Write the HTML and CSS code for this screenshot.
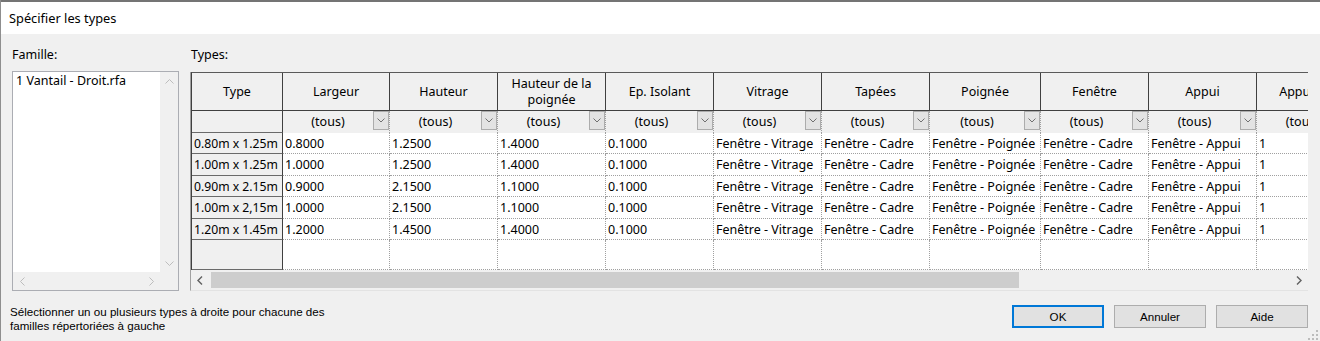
FILE: index.html
```html
<!DOCTYPE html>
<html lang="fr">
<head>
<meta charset="utf-8">
<title>Spécifier les types</title>
<link rel="stylesheet" href="styles.css">
</head>
<body>
<div class="window">
  <div class="topstrip"></div>
  <div class="titlebar">Spécifier les types</div>
  <div class="main">
    <div class="col-family">
      <div class="label">Famille:</div>
      <div class="listbox">
        <div class="list-area"><div class="list-item">1 Vantail - Droit.rfa</div></div>
        <div class="vscroll">
          <span class="sb-arrow"><svg width="9" height="5" viewBox="0 0 9 5"><path d="M0.5 4.5 L4.5 0.5 L8.5 4.5" fill="none" stroke="#bdbdbd" stroke-width="1"/></svg></span>
          <span class="sb-arrow"><svg width="9" height="5" viewBox="0 0 9 5"><path d="M0.5 0.5 L4.5 4.5 L8.5 0.5" fill="none" stroke="#bdbdbd" stroke-width="1"/></svg></span>
        </div>
        <div class="hscroll">
          <span class="sb-arrow"><svg width="5" height="9" viewBox="0 0 5 9"><path d="M4.5 0.5 L0.5 4.5 L4.5 8.5" fill="none" stroke="#bdbdbd" stroke-width="1"/></svg></span>
          <span class="sb-arrow"><svg width="5" height="9" viewBox="0 0 5 9"><path d="M0.5 0.5 L4.5 4.5 L0.5 8.5" fill="none" stroke="#bdbdbd" stroke-width="1"/></svg></span>
        </div>
        <div class="corner"></div>
      </div>
    </div>
    <div class="col-types">
      <div class="label label-types">Types:</div>
      <div class="grid-box">
        <div class="grid-view">
          <div class="grid">
            <div class="hc">Type</div>
            <div class="hc">Largeur</div>
            <div class="hc">Hauteur</div>
            <div class="hc">Hauteur de la poignée</div>
            <div class="hc">Ep. Isolant</div>
            <div class="hc">Vitrage</div>
            <div class="hc">Tapées</div>
            <div class="hc">Poignée</div>
            <div class="hc">Fenêtre</div>
            <div class="hc">Appui</div>
            <div class="hc">Appui actif</div>

            <div class="rh"></div>
            <div class="fc"><span class="ft">(tous)</span><span class="dd"><svg width="8" height="5" viewBox="0 0 8 5"><path d="M0.5 0.5 L4 4 L7.5 0.5" fill="none" stroke="#707070"/></svg></span></div>
            <div class="fc"><span class="ft">(tous)</span><span class="dd"><svg width="8" height="5" viewBox="0 0 8 5"><path d="M0.5 0.5 L4 4 L7.5 0.5" fill="none" stroke="#707070"/></svg></span></div>
            <div class="fc"><span class="ft">(tous)</span><span class="dd"><svg width="8" height="5" viewBox="0 0 8 5"><path d="M0.5 0.5 L4 4 L7.5 0.5" fill="none" stroke="#707070"/></svg></span></div>
            <div class="fc"><span class="ft">(tous)</span><span class="dd"><svg width="8" height="5" viewBox="0 0 8 5"><path d="M0.5 0.5 L4 4 L7.5 0.5" fill="none" stroke="#707070"/></svg></span></div>
            <div class="fc"><span class="ft">(tous)</span><span class="dd"><svg width="8" height="5" viewBox="0 0 8 5"><path d="M0.5 0.5 L4 4 L7.5 0.5" fill="none" stroke="#707070"/></svg></span></div>
            <div class="fc"><span class="ft">(tous)</span><span class="dd"><svg width="8" height="5" viewBox="0 0 8 5"><path d="M0.5 0.5 L4 4 L7.5 0.5" fill="none" stroke="#707070"/></svg></span></div>
            <div class="fc"><span class="ft">(tous)</span><span class="dd"><svg width="8" height="5" viewBox="0 0 8 5"><path d="M0.5 0.5 L4 4 L7.5 0.5" fill="none" stroke="#707070"/></svg></span></div>
            <div class="fc"><span class="ft">(tous)</span><span class="dd"><svg width="8" height="5" viewBox="0 0 8 5"><path d="M0.5 0.5 L4 4 L7.5 0.5" fill="none" stroke="#707070"/></svg></span></div>
            <div class="fc"><span class="ft">(tous)</span><span class="dd"><svg width="8" height="5" viewBox="0 0 8 5"><path d="M0.5 0.5 L4 4 L7.5 0.5" fill="none" stroke="#707070"/></svg></span></div>
            <div class="fc"><span class="ft">(tous)</span><span class="dd"><svg width="8" height="5" viewBox="0 0 8 5"><path d="M0.5 0.5 L4 4 L7.5 0.5" fill="none" stroke="#707070"/></svg></span></div>

            <div class="rh">0.80m x 1.25m</div>
            <div class="dc">0.8000</div><div class="dc">1.2500</div><div class="dc">1.4000</div><div class="dc">0.1000</div>
            <div class="dc">Fenêtre - Vitrage</div><div class="dc">Fenêtre - Cadre</div><div class="dc">Fenêtre - Poignée</div>
            <div class="dc">Fenêtre - Cadre</div><div class="dc">Fenêtre - Appui</div><div class="dc">1</div>

            <div class="rh">1.00m x 1.25m</div>
            <div class="dc">1.0000</div><div class="dc">1.2500</div><div class="dc">1.4000</div><div class="dc">0.1000</div>
            <div class="dc">Fenêtre - Vitrage</div><div class="dc">Fenêtre - Cadre</div><div class="dc">Fenêtre - Poignée</div>
            <div class="dc">Fenêtre - Cadre</div><div class="dc">Fenêtre - Appui</div><div class="dc">1</div>

            <div class="rh">0.90m x 2.15m</div>
            <div class="dc">0.9000</div><div class="dc">2.1500</div><div class="dc">1.1000</div><div class="dc">0.1000</div>
            <div class="dc">Fenêtre - Vitrage</div><div class="dc">Fenêtre - Cadre</div><div class="dc">Fenêtre - Poignée</div>
            <div class="dc">Fenêtre - Cadre</div><div class="dc">Fenêtre - Appui</div><div class="dc">1</div>

            <div class="rh">1.00m x 2,15m</div>
            <div class="dc">1.0000</div><div class="dc">2.1500</div><div class="dc">1.1000</div><div class="dc">0.1000</div>
            <div class="dc">Fenêtre - Vitrage</div><div class="dc">Fenêtre - Cadre</div><div class="dc">Fenêtre - Poignée</div>
            <div class="dc">Fenêtre - Cadre</div><div class="dc">Fenêtre - Appui</div><div class="dc">1</div>

            <div class="rh">1.20m x 1.45m</div>
            <div class="dc">1.2000</div><div class="dc">1.4500</div><div class="dc">1.4000</div><div class="dc">0.1000</div>
            <div class="dc">Fenêtre - Vitrage</div><div class="dc">Fenêtre - Cadre</div><div class="dc">Fenêtre - Poignée</div>
            <div class="dc">Fenêtre - Cadre</div><div class="dc">Fenêtre - Appui</div><div class="dc">1</div>

            <div class="rh"></div>
            <div class="dc"></div><div class="dc"></div><div class="dc"></div><div class="dc"></div>
            <div class="dc"></div><div class="dc"></div><div class="dc"></div>
            <div class="dc"></div><div class="dc"></div><div class="dc"></div>
          </div>
        </div>
        <div class="grid-hscroll">
          <span class="gs-btn"><svg width="6" height="9" viewBox="0 0 6 9"><path d="M5 0.5 L1 4.5 L5 8.5" fill="none" stroke="#606060" stroke-width="1.4"/></svg></span>
          <span class="gs-thumb"></span>
          <span class="gs-track"></span>
          <span class="gs-btn"><svg width="6" height="9" viewBox="0 0 6 9"><path d="M1 0.5 L5 4.5 L1 8.5" fill="none" stroke="#606060" stroke-width="1.4"/></svg></span>
        </div>
      </div>
    </div>
  </div>
  <div class="footer">
    <p class="help">Sélectionner un ou plusieurs types à droite pour chacune des<br>familles répertoriées à gauche</p>
    <div class="buttons">
      <button class="btn btn-default" type="button">OK</button>
      <button class="btn" type="button">Annuler</button>
      <button class="btn" type="button">Aide</button>
    </div>
  </div>
  <svg class="grip" width="10" height="10" viewBox="0 0 10 10">
    <rect x="8" y="0" width="2" height="2" fill="#bcbcbc"/>
    <rect x="8" y="4" width="2" height="2" fill="#bcbcbc"/>
    <rect x="4" y="4" width="2" height="2" fill="#bcbcbc"/>
    <rect x="8" y="8" width="2" height="2" fill="#bcbcbc"/>
    <rect x="4" y="8" width="2" height="2" fill="#bcbcbc"/>
    <rect x="0" y="8" width="2" height="2" fill="#bcbcbc"/>
  </svg>
</div>
</body>
</html>
```

FILE: styles.css
```css
* { box-sizing: border-box; }
html, body { margin: 0; padding: 0; }
body {
  background: #f0f0f0;
  font-family: "Noto Sans", "Open Sans", sans-serif;
  font-size: 12.5px;
  color: #000;
}
.window {
  position: relative;
  width: 1320px;
  height: 341px;
  overflow: hidden;
  background: #f0f0f0;
  border-left: 1px solid #8e8e8e;
}
.topstrip { height: 2px; background: #747474; }
.titlebar {
  height: 32px;
  line-height: 32px;
  background: #fff;
  padding-left: 8px;
  font-size: 12.8px;
  white-space: nowrap;
}
.main {
  display: flex;
  gap: 11px;
  padding: 13px 12px 0 11px;
}
.col-family { width: 167px; flex: none; }
.col-types { width: 1118px; flex: none; }
.label {
  height: 16px;
  line-height: 16px;
  margin-bottom: 8px;
  white-space: nowrap;
}
.label-types { padding-left: 1px; margin-bottom: 9px; }

/* family list box */
.listbox {
  height: 220px;
  border: 1px solid #abadb3;
  display: grid;
  grid-template-columns: 147px 18px;
  grid-template-rows: 200px 18px;
  background: #f0f0f0;
}
.list-area { background: #fff; padding: 1px 3px; }
.list-item { line-height: 16px; white-space: nowrap; }
.vscroll {
  display: flex;
  flex-direction: column;
  justify-content: space-between;
}
.hscroll {
  display: flex;
  justify-content: space-between;
}
.sb-arrow {
  width: 18px;
  height: 18px;
  display: flex;
  align-items: center;
  justify-content: center;
}
.sb-arrow svg { display: block; }

/* types grid */
.grid-box {
  height: 219px;
  border-left: 1px solid #a0a0a0;
  border-bottom: 1px solid #e3e3e3;
  background: #f0f0f0;
}
.grid-view {
  width: 1117px;
  height: 198px;
  overflow: hidden;
  background: #fff;
}
.grid {
  display: grid;
  width: max-content;
  grid-template-columns: 91px 107px 108px 108px 108px 108px 108px 111px 108px 108px 108px;
  grid-template-rows: 38px 22px 21px 22px 21px 22px 21px 30px;
  border-left: 1px solid #404040;
  border-top: 1px solid #5a5a5a;
}
.hc {
  background: #f0f0f0;
  border-right: 1px solid #404040;
  border-bottom: 1px solid #404040;
  display: flex;
  align-items: center;
  justify-content: center;
  text-align: center;
  line-height: 16px;
  padding: 0 4px;
  white-space: normal;
}
.rh {
  background: #f0f0f0;
  border-right: 1px solid #404040;
  border-bottom: 1px solid #6a6a6a;
  padding-left: 2px;
  font-size: 12.2px;
  display: flex;
  align-items: center;
  white-space: nowrap;
  overflow: hidden;
}
.fc {
  background: #f0f0f0;
  border-right: 1px dotted #a0a0a0;
  display: flex;
  align-items: flex-start;
}
.ft {
  flex: 1;
  text-align: center;
  line-height: 21px;
  white-space: nowrap;
  overflow: hidden;
}
.dd {
  flex: none;
  width: 16px;
  height: 19px;
  background: #e3e3e3;
  border: 1px solid #acacac;
  display: flex;
  align-items: center;
  justify-content: center;
}
.dd svg { display: block; }
.dc {
  background: #fff;
  border-right: 1px dotted #a0a0a0;
  border-bottom: 1px dotted #a0a0a0;
  padding-left: 2px;
  display: flex;
  align-items: center;
  white-space: nowrap;
  overflow: hidden;
}
.grid-hscroll {
  height: 20px;
  display: flex;
  align-items: center;
}
.gs-btn {
  flex: none;
  width: 18px;
  height: 20px;
  display: flex;
  align-items: center;
  justify-content: center;
}
.gs-btn svg { display: block; }
.gs-thumb {
  flex: none;
  width: 808px;
  height: 16px;
  margin-left: 2px;
  background: #cdcdcd;
}
.gs-track { flex: 1; }

/* footer */
.footer {
  display: flex;
  justify-content: space-between;
  align-items: flex-start;
  margin-top: 14px;
  padding: 0 12px 0 9px;
}
.help {
  margin: 0;
  font-family: "Liberation Sans", Arial, sans-serif;
  font-size: 11.6px;
  line-height: 14px;
}
.buttons { display: flex; gap: 10px; }
.btn {
  width: 92px;
  height: 23px;
  margin: 0;
  padding: 0;
  background: #e1e1e1;
  border: 1px solid #adadad;
  font-family: "Liberation Sans", Arial, sans-serif;
  font-size: 11.6px;
  color: #000;
}
.btn-default {
  border: 2px solid #0078d7;
}
.grip {
  position: absolute;
  right: 2px;
  bottom: 1px;
}
```
